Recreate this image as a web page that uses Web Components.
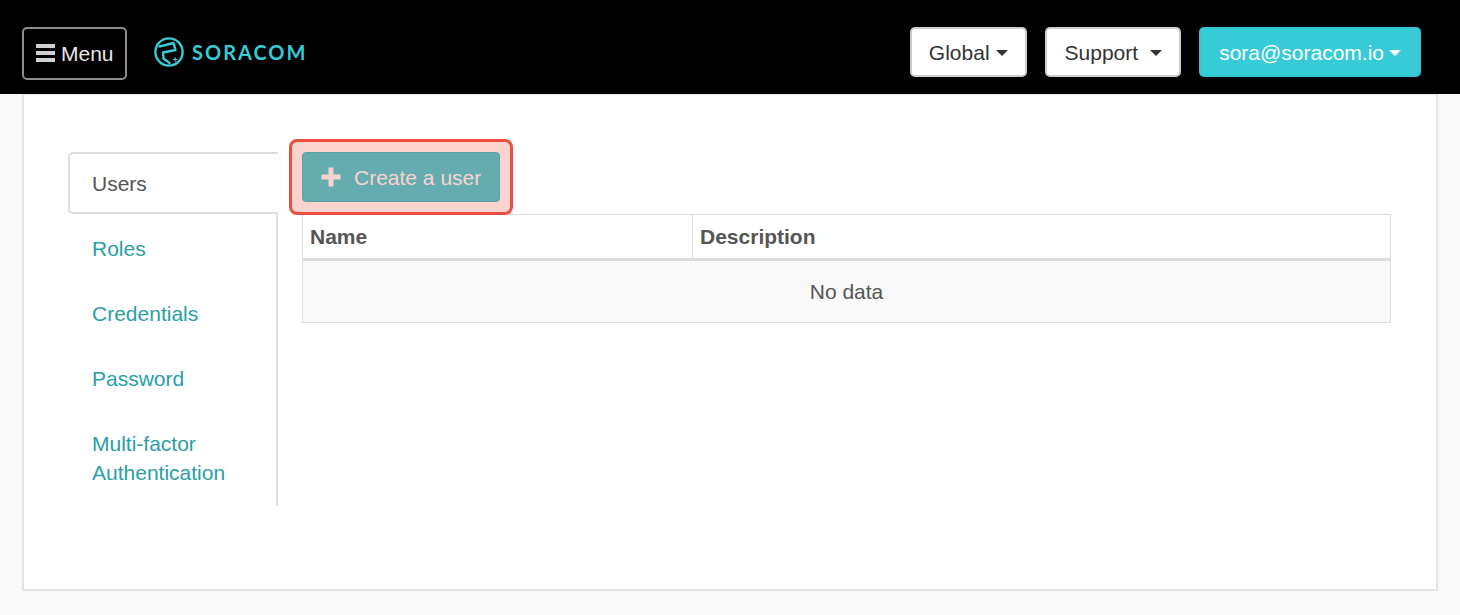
<!DOCTYPE html>
<html>
<head>
<meta charset="utf-8">
<title>Users</title>
<style>
  html, body { margin: 0; height: 100%; }
  body {
    background: #f8f8f8;
    font-family: "Liberation Sans", Arial, sans-serif;
    font-size: 21px;
    color: #555;
    overflow: hidden;
  }
</style>
</head>
<body>
<app-navbar>
  <menu-button></menu-button>
  <brand-logo></brand-logo>
  <nav-dropdown slot="right" style="--caret-gap: 6px">Global</nav-dropdown>
  <nav-dropdown slot="right" style="--caret-gap: 12px; --pad-left: 18px">Support</nav-dropdown>
  <nav-dropdown slot="right" variant="primary" style="--caret-gap: 5px">sora@soracom.io</nav-dropdown>
</app-navbar>
<main-card>
  <side-nav slot="side">
    <side-nav-item active>Users</side-nav-item>
    <side-nav-item>Roles</side-nav-item>
    <side-nav-item>Credentials</side-nav-item>
    <side-nav-item>Password</side-nav-item>
    <side-nav-item>Multi-factor<br>Authentication</side-nav-item>
  </side-nav>
  <create-button>Create a user</create-button>
  <data-table></data-table>
</main-card>

<script>
class AppNavbar extends HTMLElement {
  constructor() {
    super();
    this.attachShadow({ mode: 'open' });
    this.shadowRoot.innerHTML = `
      <style>
        :host {
          display: flex;
          align-items: flex-start;
          justify-content: space-between;
          height: 94px;
          box-sizing: border-box;
          padding: 27px 39px 0 22px;
          background: #000;
        }
        .left { display: flex; align-items: flex-start; gap: 27px; }
        .right { display: flex; align-items: flex-start; gap: 18px; }
      </style>
      <div class="left"><slot></slot></div>
      <div class="right"><slot name="right"></slot></div>
    `;
  }
}

class MenuButton extends HTMLElement {
  constructor() {
    super();
    this.attachShadow({ mode: 'open' });
    this.shadowRoot.innerHTML = `
      <style>
        :host {
          display: flex;
          align-items: center;
          box-sizing: border-box;
          width: 105px;
          height: 53px;
          padding-left: 12px;
          gap: 6px;
          border: 2px solid #8c8c8c;
          border-radius: 5px;
          color: #e6e6e6;
          font-size: 21px;
        }
        svg { display: block; flex: none; }
      </style>
      <svg width="19" height="19" viewBox="0 0 19 19" fill="#d0d0d0">
        <rect y="0" width="19" height="4"></rect>
        <rect y="7" width="19" height="4"></rect>
        <rect y="14" width="19" height="4"></rect>
      </svg>
      <span>Menu</span>
    `;
  }
}

class BrandLogo extends HTMLElement {
  constructor() {
    super();
    this.attachShadow({ mode: 'open' });
    this.shadowRoot.innerHTML = `
      <style>
        :host {
          display: flex;
          align-items: center;
          gap: 8px;
          height: 50px;
          color: #36cbd6;
          font-family: Lato, sans-serif;
          font-size: 20px;
          font-weight: 700;
          letter-spacing: 2px;
        }
        svg { display: block; flex: none; }
      </style>
      <svg width="30" height="30" viewBox="0 0 30 30" fill="none" stroke="#36cbd6" stroke-width="2.4" stroke-linecap="round" stroke-linejoin="round">
        <circle cx="15" cy="15" r="13.6"></circle>
        <path d="M5.5 9.5 L19.5 6 L21.5 13 L9 15.5 L9.5 21.5 L15.5 26"></path>
        <path d="M19.5 22.5 L23 22.5 M21.2 20.7 L21.2 24.3" stroke-width="1.2"></path>
      </svg>
      <span>SORACOM</span>
    `;
  }
}

class NavDropdown extends HTMLElement {
  constructor() {
    super();
    this.attachShadow({ mode: 'open' });
    this.shadowRoot.innerHTML = `
      <style>
        :host {
          display: flex;
          align-items: center;
          box-sizing: border-box;
          height: 50px;
          padding: 2px 17px 0 var(--pad-left, 17px);
          background: #fff;
          border: 2px solid #ccc;
          border-radius: 5px;
          color: #333;
          font-size: 21px;
        }
        :host([variant="primary"]) {
          padding: 2px 18px 0;
          background: #36cbd6;
          border-color: #33c5d0;
          color: #fff;
        }
        .caret {
          width: 0;
          height: 0;
          margin-left: var(--caret-gap, 6px);
          border-top: 6px solid currentColor;
          border-left: 6px solid transparent;
          border-right: 6px solid transparent;
        }
      </style>
      <slot></slot><span class="caret"></span>
    `;
  }
}

class MainCard extends HTMLElement {
  constructor() {
    super();
    this.attachShadow({ mode: 'open' });
    this.shadowRoot.innerHTML = `
      <style>
        :host {
          display: flex;
          align-items: flex-start;
          box-sizing: border-box;
          height: 497px;
          margin: 0 22px;
          padding: 57px 45px 0 44px;
          background: #fff;
          border: 2px solid #e3e3e3;
          border-top-width: 1px;
          color: #555;
        }
        .side { flex: none; width: 210px; }
        .content {
          flex: 1;
          min-width: 0;
          margin-left: 24px;
          display: flex;
          flex-direction: column;
          align-items: flex-start;
        }
      </style>
      <div class="side"><slot name="side"></slot></div>
      <div class="content"><slot></slot></div>
    `;
  }
}

class SideNav extends HTMLElement {
  constructor() {
    super();
    this.attachShadow({ mode: 'open' });
    this.shadowRoot.innerHTML = `
      <style>
        :host { display: block; }
        .list { display: flex; flex-direction: column; gap: 2px; padding-bottom: 2px; position: relative; }
        .rail {
          position: absolute;
          top: 60px;
          bottom: 0;
          right: 0;
          width: 2px;
          background: #ddd;
        }
      </style>
      <div class="list"><span class="rail"></span><slot></slot></div>
    `;
  }
}

class SideNavItem extends HTMLElement {
  constructor() {
    super();
    this.attachShadow({ mode: 'open' });
    this.shadowRoot.innerHTML = `
      <style>
        :host {
          display: block;
          box-sizing: border-box;
          padding: 17px 24px;
          line-height: 29px;
          font-size: 21px;
          color: #2a9fa6;
        }
        :host([active]) {
          padding: 15px 22px 14px;
          height: 62px;
          margin-bottom: 1px;
          position: relative;
          z-index: 1;
          background: #fff;
          border: 2px solid #ddd;
          border-right-width: 0;
          border-radius: 5px 0 0 5px;
          color: #555;
        }
      </style>
      <slot></slot>
    `;
  }
}

class CreateButton extends HTMLElement {
  constructor() {
    super();
    this.attachShadow({ mode: 'open' });
    this.shadowRoot.innerHTML = `
      <style>
        :host {
          display: block;
          position: relative;
          margin-bottom: 12px;
        }
        .btn {
          display: flex;
          align-items: center;
          gap: 13px;
          box-sizing: border-box;
          width: 198px;
          height: 50px;
          padding-left: 18px;
          background: #36cbd6;
          border: 1px solid #2dbcc7;
          border-radius: 4px;
          color: #fff;
          font-size: 21px;
        }
        .btn span { padding-top: 2px; }
        svg { display: block; flex: none; }
        /* red callout laid over the button */
        .callout {
          position: absolute;
          left: -13px;
          top: -13px;
          width: 224px;
          height: 76px;
          box-sizing: border-box;
          border: 3px solid #ec4f3f;
          border-radius: 8px;
          background: rgba(238, 80, 60, 0.25);
        }
      </style>
      <div class="btn">
        <svg width="20" height="20" viewBox="0 0 20 20" fill="#fff">
          <path d="M7.5 0.5h5v7h7v5h-7v7h-5v-7h-7v-5h7z"></path>
        </svg>
        <span><slot></slot></span>
      </div>
      <div class="callout"></div>
    `;
  }
}

class DataTable extends HTMLElement {
  constructor() {
    super();
    this.attachShadow({ mode: 'open' });
    this.shadowRoot.innerHTML = `
      <style>
        :host { display: block; width: 100%; font-size: 21px; color: #555; }
        .head {
          display: grid;
          grid-template-columns: 389px 1fr;
          height: 47px;
          box-sizing: border-box;
          border: 1px solid #ddd;
          border-bottom: 3px solid #ddd;
          font-weight: 700;
        }
        .head div { display: flex; align-items: center; padding-left: 7px; }
        .head div + div { border-left: 1px solid #ddd; padding-left: 7px; }
        .empty {
          height: 62px;
          box-sizing: border-box;
          display: flex;
          align-items: center;
          justify-content: center;
          background: #f9f9f9;
          border: 1px solid #ddd;
          border-top: 0;
        }
      </style>
      <div class="head"><div>Name</div><div>Description</div></div>
      <div class="empty">No data</div>
    `;
  }
}

customElements.define('app-navbar', AppNavbar);
customElements.define('menu-button', MenuButton);
customElements.define('brand-logo', BrandLogo);
customElements.define('nav-dropdown', NavDropdown);
customElements.define('main-card', MainCard);
customElements.define('side-nav', SideNav);
customElements.define('side-nav-item', SideNavItem);
customElements.define('create-button', CreateButton);
customElements.define('data-table', DataTable);
</script>
</body>
</html>
